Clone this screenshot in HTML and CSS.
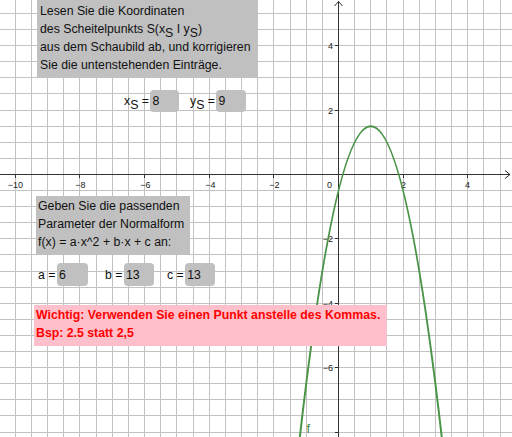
FILE: index.html
```html
<!DOCTYPE html>
<html lang="de">
<head>
<meta charset="utf-8">
<title>Scheitelpunkt</title>
<link rel="stylesheet" href="styles.css">
</head>
<body>
<div class="stage">
  <svg class="graph" viewBox="0 0 512 437" width="512" height="437" xmlns="http://www.w3.org/2000/svg">
    <path class="grid" d="M15.5 0V437M31.5 0V437M47.5 0V437M63.5 0V437M79.5 0V437M96.5 0V437M112.5 0V437M128.5 0V437M144.5 0V437M160.5 0V437M176.5 0V437M193.5 0V437M209.5 0V437M225.5 0V437M241.5 0V437M257.5 0V437M273.5 0V437M290.5 0V437M306.5 0V437M322.5 0V437M354.5 0V437M370.5 0V437M386.5 0V437M403.5 0V437M419.5 0V437M435.5 0V437M451.5 0V437M467.5 0V437M483.5 0V437M500.5 0V437M0 13.5H512M0 29.5H512M0 45.5H512M0 61.5H512M0 77.5H512M0 93.5H512M0 110.5H512M0 126.5H512M0 142.5H512M0 158.5H512M0 190.5H512M0 206.5H512M0 222.5H512M0 238.5H512M0 254.5H512M0 271.5H512M0 287.5H512M0 303.5H512M0 319.5H512M0 335.5H512M0 351.5H512M0 367.5H512M0 383.5H512M0 399.5H512M0 415.5H512M0 432.5H512"/>
    <path class="axis" d="M0 174.5H510M338.5 1V437"/>
    <path class="axis" d="M505 170.5L510 174.5L505 178.5M334.5 6L338.5 1.5L342.5 6"/>
    <path class="axis" d="M15.5 174.5V178M79.5 174.5V178M144.5 174.5V178M209.5 174.5V178M273.5 174.5V178M403.5 174.5V178M467.5 174.5V178M335 45.5H338.5M335 110.5H338.5M335 238.5H338.5M335 303.5H338.5M335 367.5H338.5M335 432.5H338.5"/>
    <g class="ticklabel xlab">
      <text x="15.5" y="188">−10</text>
      <text x="80.5" y="188">−8</text>
      <text x="145.5" y="188">−6</text>
      <text x="210.5" y="188">−4</text>
      <text x="274.5" y="188">−2</text>
      <text x="329.5" y="188">0</text>
      <text x="403.5" y="188">2</text>
      <text x="467.5" y="188">4</text>
    </g>
    <g class="ticklabel ylab">
      <text x="333" y="49">4</text>
      <text x="333" y="114">2</text>
      <text x="333" y="242">−2</text>
      <text x="333" y="307">−4</text>
      <text x="333" y="371">−6</text>
    </g>
    <path class="curve" d="M290.05 528.7Q370.8 -276.3 451.55 528.7"/>
    <text class="curvelabel" x="306.5" y="433">f</text>
  </svg>

  <div class="obj note note-read">Lesen Sie die Koordinaten<br>des Scheitelpunkts S(x<span class="sub">S</span> I y<span class="sub">S</span>)<br>aus dem Schaubild ab, und korrigieren<br>Sie die untenstehenden Einträge.</div>

  <label class="obj field pos-xs"><span class="lbl">x<span class="sub">S</span> =</span><input class="box box-r1" type="text" value="8"></label>
  <label class="obj field pos-ys"><span class="lbl">y<span class="sub">S</span> =</span><input class="box box-r1 box-w30" type="text" value="9"></label>

  <div class="obj note note-param">Geben Sie die passenden<br>Parameter der Normalform<br>f(x) = a·x^2 + b·x + c an:</div>

  <label class="obj field pos-a"><span class="lbl">a =</span><input class="box box-r2 box-w31" type="text" value="6"></label>
  <label class="obj field pos-b"><span class="lbl">b =</span><input class="box box-r2 box-w30" type="text" value="13"></label>
  <label class="obj field pos-c"><span class="lbl">c =</span><input class="box box-r2 box-w30" type="text" value="13"></label>

  <div class="obj warn">Wichtig: Verwenden Sie einen Punkt anstelle des Kommas.<br>Bsp: 2.5 statt 2,5</div>
</div>
</body>
</html>
```
FILE: styles.css
```css
html, body {
  margin: 0;
  padding: 0;
  background: #ffffff;
}

body {
  font-family: "Liberation Sans", Arial, sans-serif;
  font-size: 12.3px;
  color: #111111;
}

.stage {
  position: relative;
  width: 512px;
  height: 437px;
  overflow: hidden;
  background: #ffffff;
}

.graph {
  position: absolute;
  left: 0;
  top: 0;
  display: block;
}

.grid {
  fill: none;
  stroke: #c2c2c2;
  stroke-width: 1;
}

.axis {
  fill: none;
  stroke: #333333;
  stroke-width: 1;
}

.ticklabel text {
  font-family: "Liberation Sans", Arial, sans-serif;
  font-size: 9px;
  fill: #222222;
}

.xlab text {
  text-anchor: middle;
}

.ylab text {
  text-anchor: end;
}

.curve {
  fill: none;
  stroke: #4a9448;
  stroke-width: 2;
}

.curvelabel {
  font-family: "Liberation Sans", Arial, sans-serif;
  font-size: 12.5px;
  fill: #3f8a3d;
}

/* objects placed on the GeoGebra canvas */
.obj {
  position: absolute;
}

.note {
  background: #c0c0c0;
  line-height: 18px;
  white-space: nowrap;
  box-sizing: border-box;
}

.note-read {
  left: 37px;
  top: 0;
  width: 220px;
  height: 78px;
  padding: 2px 3px 4px 3px;
}

.note-param {
  left: 36px;
  top: 196px;
  width: 154px;
  height: 59px;
  padding: 1px 2px 4px 2px;
}

.sub {
  vertical-align: -4px;
  line-height: 0;
}

.field {
  display: flex;
  align-items: center;
  gap: 1.5px;
  line-height: 18px;
  white-space: nowrap;
}

.pos-xs { left: 124px; top: 90px; }
.pos-ys { left: 190px; top: 90px; }
.pos-a { left: 38px; top: 263px; }
.pos-b { left: 105px; top: 263px; }
.pos-c { left: 167px; top: 263px; }

.box {
  box-sizing: border-box;
  width: 29px;
  margin: 0;
  padding: 0 2px;
  border: 0;
  border-radius: 4px;
  background: #c0c0c0;
  font: inherit;
  color: #111111;
  outline: none;
}

.box-r1 { height: 22px; }
.box-r2 { height: 23px; }
.box-w30 { width: 30px; }
.box-w31 { width: 31px; }

.warn {
  left: 34px;
  top: 305px;
  width: 353px;
  height: 41px;
  box-sizing: border-box;
  padding: 1px 2px 4px 2px;
  background: #ffc0cb;
  color: #ff0000;
  font-weight: bold;
  line-height: 18px;
  white-space: nowrap;
}
```
